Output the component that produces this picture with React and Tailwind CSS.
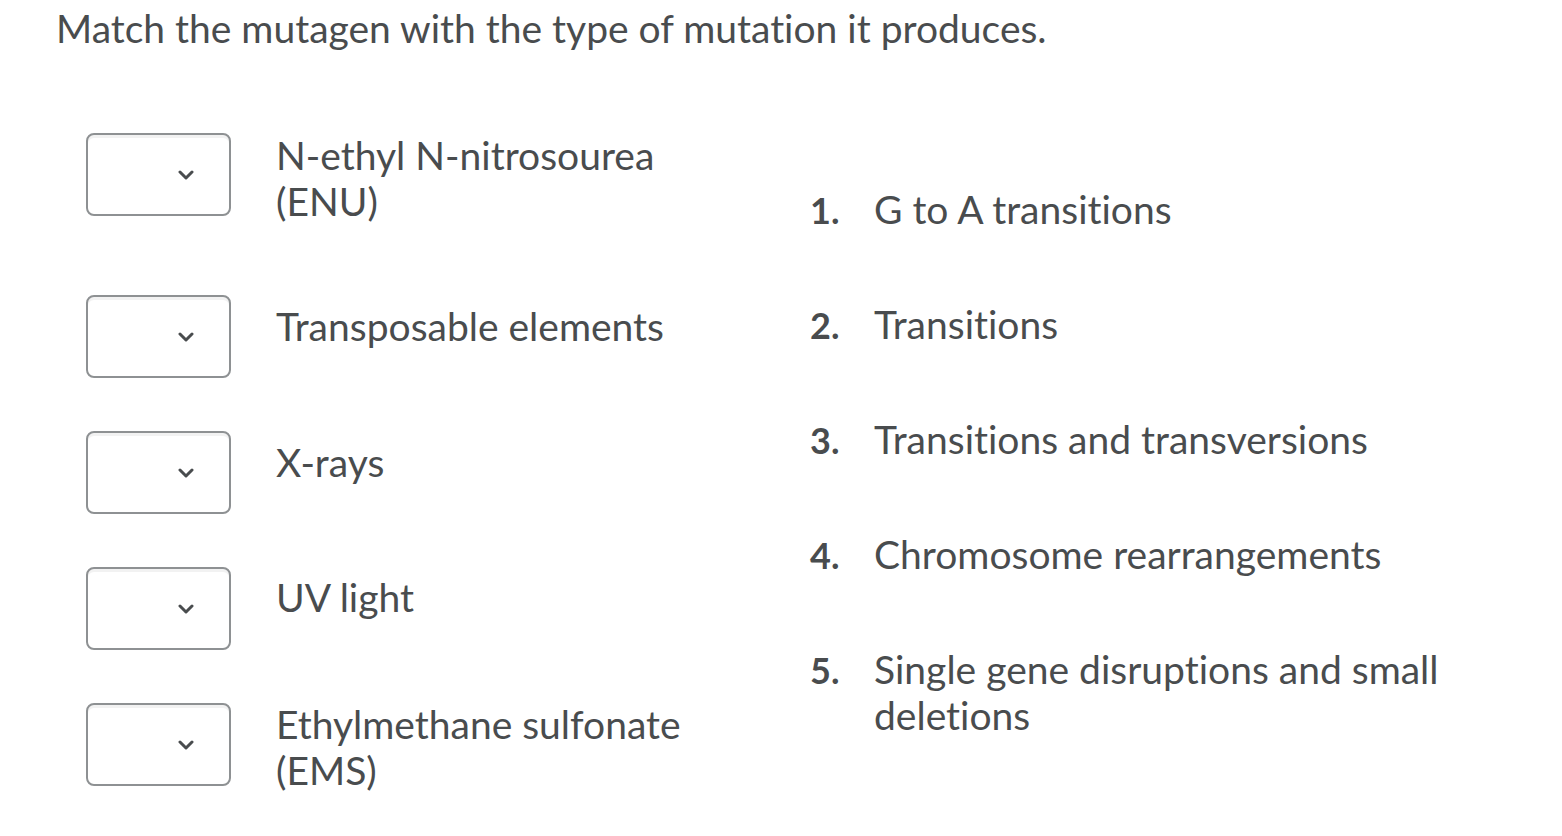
const rows = [
  { label: ['N-ethyl N-nitrosourea', '(ENU)'], mt: 'mt-[82px]', off: 'mt-[-1px]' },
  { label: ['Transposable elements'], mt: 'mt-[71px]', off: 'mt-[8px]' },
  { label: ['X-rays'], mt: 'mt-[53px]', off: 'mt-[8px]' },
  { label: ['UV light'], mt: 'mt-[53px]', off: 'mt-[7px]' },
  { label: ['Ethylmethane sulfonate', '(EMS)'], mt: 'mt-[53px]', off: 'mt-[-2px]' },
];

const choices = [
  ['G to A transitions'],
  ['Transitions'],
  ['Transitions and transversions'],
  ['Chromosome rearrangements'],
  ['Single gene disruptions and small', 'deletions'],
];

const Chevron = () => (
  <svg width="16" height="10" viewBox="0 0 16 10" fill="none">
    <path d="M2 2 L8 8 L14 2" stroke="#494c4e" strokeWidth="3" strokeLinecap="round" strokeLinejoin="round" />
  </svg>
);

const SelectBox = () => (
  <div className="relative w-[145px] h-[83px] shrink-0 rounded-[8px] border-2 border-[#8e9193] bg-white shadow-[inset_0_3px_0_0_#f2f2f2]">
    <div className="absolute left-[90px] top-1/2 -translate-y-1/2 flex">
      <Chevron />
    </div>
  </div>
);

export default function App() {
  return (
    <div className="min-h-screen bg-white text-[#494c4e] font-['Lato','Open_Sans',sans-serif] [font-variant-ligatures:none]">
      <h1 className="pl-[56px] pt-[5px] text-[39px] leading-[46px] font-normal">
        Match the mutagen with the type of mutation it produces.
      </h1>
      <div className="flex">
        <div className="flex flex-col pl-[86px] w-[810px]">
          {rows.map((r, i) => (
            <div key={i} className={`flex items-start ${r.mt}`}>
              <SelectBox />
              <div className={`ml-[45px] text-[39px] leading-[46px] ${r.off}`}>
                {r.label.map((l, j) => (
                  <div key={j}>{l}</div>
                ))}
              </div>
            </div>
          ))}
        </div>
        <ol className="flex flex-col gap-[68px] pt-[135px]">
          {choices.map((c, i) => (
            <li key={i} className="flex items-baseline">
              <span className="w-[64px] shrink-0 text-[36px] font-bold leading-[46px]">{i + 1}.</span>
              <span className="text-[39px] leading-[46px]">
                {c.map((l, j) => (
                  <div key={j}>{l}</div>
                ))}
              </span>
            </li>
          ))}
        </ol>
      </div>
    </div>
  );
}
